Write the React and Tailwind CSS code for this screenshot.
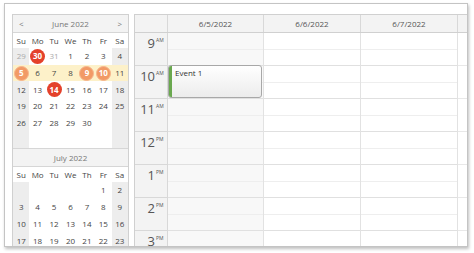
import React from "react";

const font = { fontFamily: '"Open Sans", "Noto Sans", sans-serif' };

const june = [
  [["29", "o"], ["30", "red"], ["31", "o"], ["1"], ["2"], ["3"], ["4"]],
  [["5", "orange"], ["6"], ["7"], ["8"], ["9", "orange"], ["10", "orange"], ["11"]],
  [["12"], ["13"], ["14", "red"], ["15"], ["16"], ["17"], ["18"]],
  [["19"], ["20"], ["21"], ["22"], ["23"], ["24"], ["25"]],
  [["26"], ["27"], ["28"], ["29"], ["30"], [""], [""]],
  [[""], [""], [""], [""], [""], [""], [""]],
];

const july = [
  [[""], [""], [""], [""], [""], ["1"], ["2"]],
  [["3"], ["4"], ["5"], ["6"], ["7"], ["8"], ["9"]],
  [["10"], ["11"], ["12"], ["13"], ["14"], ["15"], ["16"]],
  [["17"], ["18"], ["19"], ["20"], ["21"], ["22"], ["23"]],
];

const dayNames = ["Su", "Mo", "Tu", "We", "Th", "Fr", "Sa"];

const hours = [
  ["9", "AM"],
  ["10", "AM"],
  ["11", "AM"],
  ["12", "PM"],
  ["1", "PM"],
  ["2", "PM"],
  ["3", "PM"],
];

const Month = ({ title, rows, selected, arrows }) => {
  return (
    <div className="flex flex-col">
      <div className="h-[18px] flex items-center justify-between px-[6px] bg-[#f3f3f3] border-b border-[#d6d6d6] text-[8px] text-[#777]">
        <span className="w-[8px]">{arrows ? "<" : ""}</span>
        <span>{title}</span>
        <span className="w-[8px] text-right">{arrows ? ">" : ""}</span>
      </div>
      <div className="grid grid-cols-7 h-[15px] bg-white text-[8px] text-[#444]">
        {dayNames.map((d) => (
          <div key={d} className="flex items-center justify-center">{d}</div>
        ))}
      </div>
      {rows.map((row, ri) => (
        <div key={ri} className={"grid grid-cols-7 h-[16.7px] text-[8px] " + (ri === selected ? "bg-[#fdf1c9]" : "")}>
          {row.map(([d, kind], ci) => {
            const weekend = ci === 0 || ci === 6;
            let bg = "";
            if (ri !== selected) bg = weekend ? "bg-[#ededed]" : "bg-white";
            let inner = <span className={kind === "o" ? "text-[#aaaaaa]" : "text-[#444]"}>{d}</span>;
            if (kind === "red" || kind === "orange") {
              inner = (
                <span className={"w-[15px] h-[15px] rounded-full flex items-center justify-center text-white font-bold " + (kind === "red" ? "bg-[#e4412b]" : "bg-[#f29a66] border border-[#f6b58c]")}>
                  {d}
                </span>
              );
            }
            return (
              <div key={ci} className={"flex items-center justify-center " + bg}>
                {inner}
              </div>
            );
          })}
        </div>
      ))}
    </div>
  );
};

const HourRow = ({ h, ap }) => (
  <div className="flex h-[33px] shrink-0">
    <div className="w-[33px] shrink-0 bg-[#f3f3f3] border-r border-b border-[#d8d8d8] flex justify-end pr-[2px] pt-[2px] text-[#555]">
      <span className="text-[13px] leading-[16px]">{h}</span>
      <span className="text-[5px] leading-[8px] ml-[1px] mt-[1px] w-[9px]">{ap}</span>
    </div>
    {[0, 1, 2].map((c) => (
      <div key={c} className={"shrink-0 flex flex-col border-r border-[#e2e2e2] " + (c === 0 ? "w-[96px] bg-[#f8f8f8]" : "w-[97px] bg-white")}>
        <div className="h-[16.5px] border-b border-[#eeeeee]"></div>
        <div className="flex-1 border-b border-[#e0e0e0]"></div>
      </div>
    ))}
    <div className="flex-1 bg-white border-b border-[#e8e8e8]"></div>
  </div>
);

export default function App() {
  return (
    <div className="w-[474px] h-[253px] bg-white overflow-hidden" style={font}>
      <div className="ml-[4px] mt-[3px] w-[464px] h-[244px] border border-[#c4c4c4] shadow-[1px_2px_3px_rgba(0,0,0,0.25)] bg-white overflow-hidden flex pt-[10px] pl-[7px] gap-[5px]">
        <div className="w-[117px] shrink-0 border border-[#d0d0d0] border-b-0 flex flex-col overflow-hidden">
          <Month title="June 2022" rows={june} selected={1} arrows />
          <div className="border-t border-[#d6d6d6]">
            <Month title="July 2022" rows={july} selected={-1} />
          </div>
        </div>
        <div className="flex-1 border border-[#d0d0d0] border-b-0 border-r-0 flex flex-col overflow-hidden">
          <div className="flex h-[18px] shrink-0 bg-[#f3f3f3] border-b border-[#d0d0d0] text-[8px] text-[#555]">
            <div className="w-[33px] shrink-0 border-r border-[#d8d8d8]"></div>
            <div className="w-[96px] shrink-0 border-r border-[#d8d8d8] flex items-center justify-center">6/5/2022</div>
            <div className="w-[97px] shrink-0 border-r border-[#d8d8d8] flex items-center justify-center">6/6/2022</div>
            <div className="w-[97px] shrink-0 border-r border-[#d8d8d8] flex items-center justify-center">6/7/2022</div>
            <div className="flex-1"></div>
          </div>
          <div className="relative flex flex-col">
            {hours.map(([h, ap]) => (
              <HourRow key={h} h={h} ap={ap} />
            ))}
            <div className="absolute left-[33px] top-[32px] w-[94px] h-[33px] rounded-[3px] border border-[#a8a8a8] bg-gradient-to-b from-white to-[#ececec] flex overflow-hidden">
              <div className="w-[3px] bg-[#6aa84f] shrink-0"></div>
              <div className="pl-[3px] pt-[1px] text-[8px] text-[#333]">Event 1</div>
            </div>
          </div>
        </div>
      </div>
    </div>
  );
}
